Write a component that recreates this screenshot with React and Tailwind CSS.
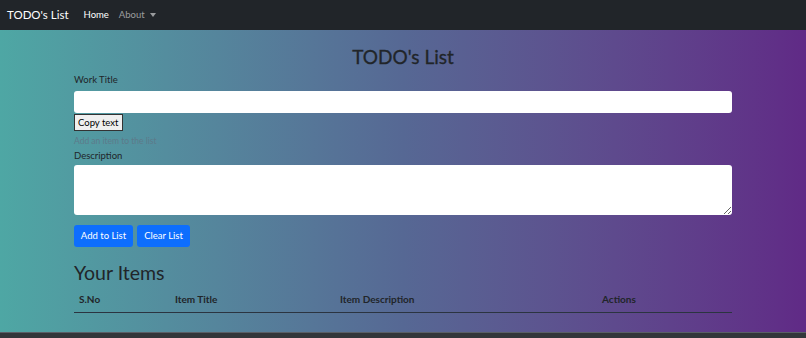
import React from "react";

const font = { fontFamily: "Lato, 'Noto Sans', sans-serif" };

const Navbar = () => (
  <nav className="h-[30px] bg-[#212529] flex items-center px-[7px]">
    <span className="text-white text-[11.5px] mr-[15px]">TODO's List</span>
    <span className="text-white text-[9.5px] mr-[10px]">Home</span>
    <span className="text-[#ffffff8c] text-[9.5px] flex items-center">
      About
      <span className="ml-[5px] border-t-[4px] border-t-[#ffffff8c] border-x-[3px] border-x-transparent"></span>
    </span>
  </nav>
);

export default function App() {
  return (
    <div style={font} className="w-[806px] h-[338px] overflow-hidden flex flex-col">
      <Navbar />
      <main className="flex-1 bg-gradient-to-r from-[#4ea7a4] via-[#566894] to-[#602a86] text-[#212529]">
        <div className="w-[658px] mx-auto">
          <h2 className="text-center text-[19px] pt-[13px] leading-[28px] [-webkit-text-stroke:0.3px_#212529]">TODO's List</h2>
          <label className="block text-[9.5px] mt-[2px] leading-[14px]">Work Title</label>
          <input className="block w-full h-[22px] bg-white rounded-[3px] mt-[4px] outline-none" />
          <button className="block bg-[#efefef] border border-[#333] text-black text-[9.5px] h-[17px] w-[49px] leading-[14px] mt-[1px] pl-[3px] text-left">
            Copy text
          </button>
          <div className="text-[8.5px] text-[#5d7a8a] mt-[4px] leading-[12px]">Add an item to the list</div>
          <label className="block text-[9.5px] mt-[2px] leading-[14px]">Description</label>
          <textarea className="block w-full h-[50px] bg-white rounded-[3px] mt-[2px] outline-none resize-y" />
          <div className="flex gap-[4px] mt-[10px]">
            <button className="bg-[#0d6efd] text-white text-[9.5px] h-[22px] w-[59px] rounded-[3px]">Add to List</button>
            <button className="bg-[#0d6efd] text-white text-[9.5px] h-[22px] w-[53px] rounded-[3px]">Clear List</button>
          </div>
          <h2 className="text-[19.5px] mt-[13px] leading-[26px]">Your Items</h2>
          <table className="w-full mt-[1px] text-[10px] font-bold border-collapse">
            <thead>
              <tr className="border-b border-[#2b3440]">
                <th className="text-left font-bold px-[5px] py-[5px] w-[96px]">S.No</th>
                <th className="text-left font-bold px-[5px] py-[5px] w-[165px]">Item Title</th>
                <th className="text-left font-bold px-[5px] py-[5px] w-[262px]">Item Description</th>
                <th className="text-left font-bold px-[5px] py-[5px]">Actions</th>
              </tr>
            </thead>
          </table>
        </div>
      </main>
      <footer className="h-[6px] bg-[#33363a] border-t border-[#5a5f66]"></footer>
    </div>
  );
}
